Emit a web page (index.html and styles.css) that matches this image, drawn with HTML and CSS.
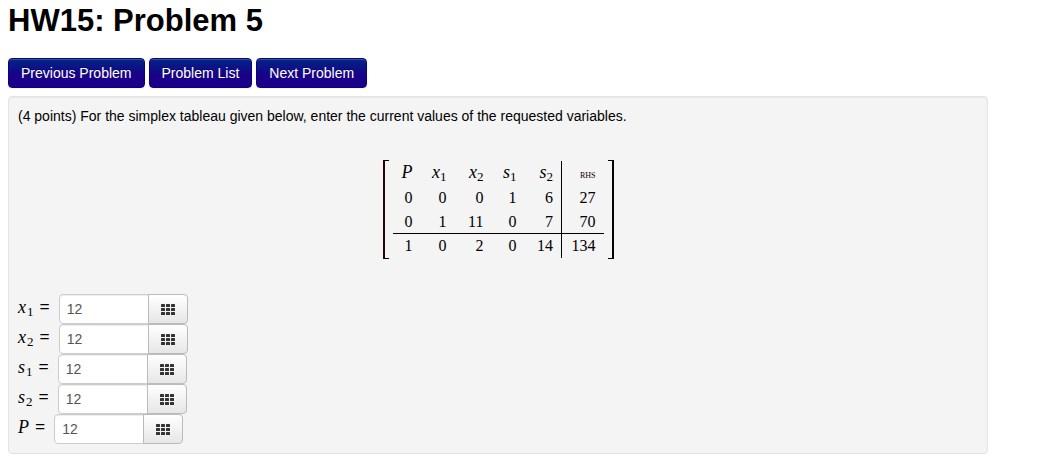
FILE: index.html
```html
<!DOCTYPE html>
<html lang="en">
    <head>
        <meta charset="UTF-8">
        <meta name="viewport" content="width=device-width, initial-scale=1.0">
        <title>HW15: Problem 5</title>
        <link rel="stylesheet" href="styles.css">
    </head>
    <body>
        <!-- Keypad icon shared by the answer buttons -->
        <svg class="icon-defs" aria-hidden="true">
            <symbol id="keypad" viewBox="0 0 14 11">
                <rect x="0" y="0" width="4" height="3" rx=".5"/>
                <rect x="5" y="0" width="4" height="3" rx=".5"/>
                <rect x="10" y="0" width="4" height="3" rx=".5"/>
                <rect x="0" y="4" width="4" height="3" rx=".5"/>
                <rect x="5" y="4" width="4" height="3" rx=".5"/>
                <rect x="10" y="4" width="4" height="3" rx=".5"/>
                <rect x="0" y="8" width="4" height="3" rx=".5"/>
                <rect x="5" y="8" width="4" height="3" rx=".5"/>
                <rect x="10" y="8" width="4" height="3" rx=".5"/>
            </symbol>
        </svg>

        <h1>HW15: Problem 5</h1>

        <nav class="problem-nav">
            <a href="#previous" class="nav-btn">Previous Problem</a>
            <a href="#list" class="nav-btn">Problem List</a>
            <a href="#next" class="nav-btn">Next Problem</a>
        </nav>

        <form class="problem">
            <p>(4 points) For the simplex tableau given below, enter the current values of the requested variables.</p>

            <div class="matrix">
                <table class="tableau">
                    <colgroup>
                        <col class="col-p">
                        <col class="col-x1">
                        <col class="col-x2">
                        <col class="col-s1">
                        <col class="col-s2">
                        <col class="col-rhs">
                    </colgroup>
                    <thead>
                        <tr><th><i>P</i></th><th><i>x</i><sub>1</sub></th><th><i>x</i><sub>2</sub></th><th><i>s</i><sub>1</sub></th><th><i>s</i><sub>2</sub></th><th class="rhs">RHS</th></tr>
                    </thead>
                    <tbody>
                        <tr><td>0</td><td>0</td><td>0</td><td>1</td><td>6</td><td>27</td></tr>
                        <tr><td>0</td><td>1</td><td>11</td><td>0</td><td>7</td><td>70</td></tr>
                    </tbody>
                    <tfoot>
                        <tr><td>1</td><td>0</td><td>2</td><td>0</td><td>14</td><td>134</td></tr>
                    </tfoot>
                </table>
            </div>

            <div class="answer">
                <label for="x1"><span><i>x</i><sub>1</sub></span><b>=</b></label>
                <input type="text" id="x1" value="12">
                <button type="button" aria-label="Open equation editor for x1"><svg><use href="#keypad"/></svg></button>
            </div>
            <div class="answer">
                <label for="x2"><span><i>x</i><sub>2</sub></span><b>=</b></label>
                <input type="text" id="x2" value="12">
                <button type="button" aria-label="Open equation editor for x2"><svg><use href="#keypad"/></svg></button>
            </div>
            <div class="answer">
                <label for="s1"><span><i>s</i><sub>1</sub></span><b>=</b></label>
                <input type="text" id="s1" value="12">
                <button type="button" aria-label="Open equation editor for s1"><svg><use href="#keypad"/></svg></button>
            </div>
            <div class="answer">
                <label for="s2"><span><i>s</i><sub>2</sub></span><b>=</b></label>
                <input type="text" id="s2" value="12">
                <button type="button" aria-label="Open equation editor for s2"><svg><use href="#keypad"/></svg></button>
            </div>
            <div class="answer">
                <label for="p"><span><i>P</i></span><b>=</b></label>
                <input type="text" id="p" value="12">
                <button type="button" aria-label="Open equation editor for P"><svg><use href="#keypad"/></svg></button>
            </div>
        </form>
    </body>
</html>
```
FILE: styles.css
```css
*,
*::before,
*::after {
  margin: 0;
  padding: 0;
  box-sizing: border-box;
}

body {
  font-family: "Helvetica Neue", "Liberation Sans", Arial, sans-serif;
  font-size: 14px;
  line-height: 20px;
  color: #000;
  background-color: #fff;
  padding: 0 76px 0 8px;
}

.icon-defs {
  display: none;
}

h1 {
  font-size: 31px;
  line-height: 42px;
  margin-bottom: 16px;
}

/* Navigation buttons */
.problem-nav {
  display: flex;
  gap: 4px;
  margin-bottom: 8px;
}

.nav-btn {
  padding: 4px 12px;
  border: 1px solid #12007a;
  border-radius: 4px;
  color: #fff;
  text-decoration: none;
  text-shadow: 0 -1px 0 rgba(0, 0, 0, 0.25);
  background: linear-gradient(#002585, #1a0088 60%);
  box-shadow: inset 0 1px 0 rgba(255, 255, 255, 0.2), 0 1px 2px rgba(0, 0, 0, 0.05);
}

.nav-btn:hover {
  background: #1a0088;
}

/* Problem panel */
.problem {
  padding: 9px;
  border: 1px solid #e3e3e3;
  border-radius: 4px;
  background-color: #f4f4f4;
  box-shadow: inset 0 1px 1px rgba(0, 0, 0, 0.05);
}

/* Tableau, the brackets are the pseudo elements */
.matrix {
  display: flex;
  justify-content: center;
  gap: 4px;
  margin: 34px 0 35px;
}

.matrix::before,
.matrix::after {
  content: '';
  width: 6px;
  border: 2px solid #000;
  border-width: 1px 0 1px 2px;
}

.matrix::before {
  border-left-color: #2a0000;
}

.matrix::after {
  border-width: 1px 2px 1px 0;
}

.tableau {
  border-collapse: collapse;
  table-layout: fixed;
  width: 211px;
  margin: 1px 0;
  font-family: "Liberation Serif", "Times New Roman", serif;
  font-size: 16px;
  line-height: 18px;
}

.tableau th,
.tableau td {
  height: 24px;
  padding: 2px 8px 0 0;
  text-align: right;
  vertical-align: baseline;
  font-weight: normal;
}

.tableau tbody td {
  padding-top: 4px;
}

.tableau tfoot td {
  height: 25px;
  padding-top: 3px;
  border-top: 1px solid #000;
}

.col-p { width: 28px; }
.col-x1 { width: 34px; }
.col-x2 { width: 37px; }
.col-s1 { width: 33px; }
.col-s2 { width: 37px; }
.col-rhs { width: 42px; }

.tableau th:last-child,
.tableau td:last-child {
  border-left: 1px solid #000;
}

.tableau i,
.answer i {
  font-size: 18px;
}

.tableau .rhs {
  font-size: 8px;
}

sub {
  font-size: 13px;
  line-height: 0;
  vertical-align: -3px;
}

/* Answer rows */
.answer {
  display: flex;
}

.answer label {
  display: flex;
  gap: 6px;
  margin-right: 9px;
  font-family: "Liberation Serif", "Times New Roman", serif;
  font-size: 18px;
  line-height: 26px;
}

.answer sub {
  margin-left: 1px;
}

.answer input {
  width: 90px;
  height: 30px;
  padding: 4px 7px;
  border: 1px solid #ccc;
  border-radius: 4px 0 0 4px;
  font: inherit;
  color: #555;
  background-color: #fff;
  box-shadow: inset 0 1px 1px rgba(0, 0, 0, 0.075);
}

.answer button {
  display: flex;
  justify-content: center;
  align-items: center;
  width: 40px;
  height: 30px;
  margin-left: -1px;
  border: 1px solid #bbb;
  border-radius: 0 4px 4px 0;
  background: linear-gradient(#fff, #e6e6e6);
  cursor: pointer;
}

.answer svg {
  width: 14px;
  height: 11px;
  fill: #333;
}
```
